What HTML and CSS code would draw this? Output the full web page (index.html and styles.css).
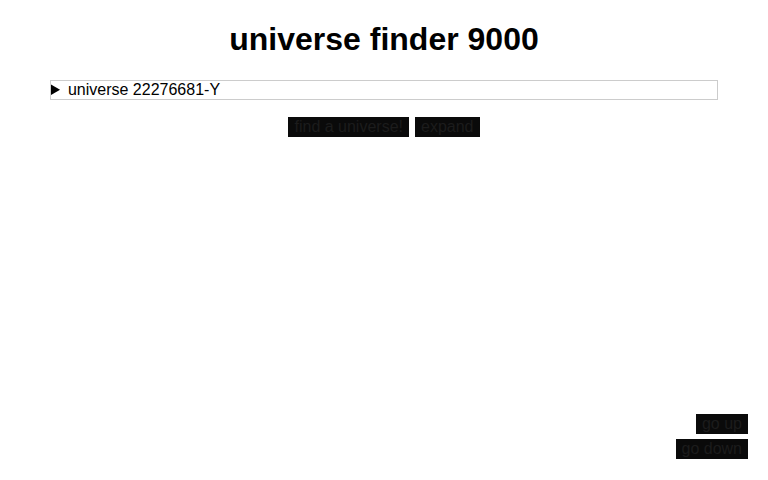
FILE: index.html
```html
<!DOCTYPE html>
<html lang="en">
<head>
    <meta charset="UTF-8">
    <title>universe finder 9000</title>
    <meta name="viewport" content="width=device-width, initial-scale=1">
    <link rel="stylesheet" href="styles.css">
</head>
<body>
    <div class="page">
        <h1>universe finder 9000</h1>
        <details class="universe">
            <summary>universe 22276681-Y</summary>
        </details>
        <div class="actions">
            <button type="button">find a universe!</button>
            <button type="button">expand</button>
        </div>
    </div>
    <div class="scroll-nav">
        <button type="button">go up</button>
        <button type="button">go down</button>
    </div>
</body>
</html>
```

FILE: styles.css
```css
body {
    margin: 0;
    background: #fff;
    color: #000;
    font-family: "Liberation Sans", Arial, sans-serif;
    font-size: 16px;
}
.page {
    padding: 0 50px;
}
h1 {
    margin: 0;
    padding: 21px 0 22px 0;
    text-align: center;
    font-size: 32px;
    line-height: 37px;
    font-weight: bold;
}
.universe {
    border: 1px solid #ccc;
    line-height: 18px;
}
.universe summary {
    cursor: pointer;
}
.actions {
    display: flex;
    justify-content: center;
    gap: 6px;
    margin-top: 17px;
}
button {
    border: none;
    border-radius: 0;
    background: #0a0a0a;
    color: #1c1c1c;
    font-family: "Liberation Sans", Arial, sans-serif;
    font-size: 16px;
    line-height: 18px;
    padding: 1px 6px;
    cursor: pointer;
}
/* floating scroll controls */
.scroll-nav {
    position: fixed;
    right: 20px;
    bottom: 21px;
    display: flex;
    flex-direction: column;
    align-items: flex-end;
    gap: 5px;
}
```
